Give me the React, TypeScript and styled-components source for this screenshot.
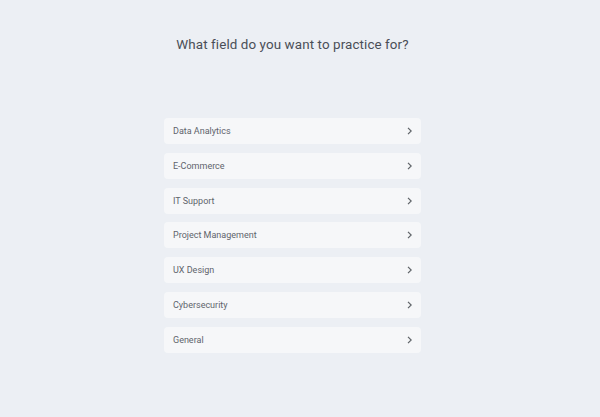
import React from "react";
import styled, { createGlobalStyle } from "styled-components";

const GlobalStyle = createGlobalStyle`
  html, body {
    margin: 0;
    padding: 0;
    background: #eceff4;
  }
  body {
    font-family: Roboto, "Noto Sans", sans-serif;
  }
`

const Page = styled.div`
  display: flex;
  flex-direction: column;
  align-items: center;
  width: 585px;
  height: 417px;
  padding-top: 36px;
  box-sizing: border-box;
`

const Title = styled.h1`
  margin: 0;
  font-size: 13.4px;
  font-weight: 400;
  color: #4a4e57;
  letter-spacing: 0.1px;
  line-height: 18px;
  -webkit-font-smoothing: antialiased;
`

const FieldList = styled.div`
  display: flex;
  flex-direction: column;
  gap: 8.8px;
  width: 257px;
  margin-top: 64px;
`

const FieldRow = styled.button`
  display: flex;
  align-items: center;
  justify-content: space-between;
  height: 26px;
  padding: 0 8px 0 9px;
  border: none;
  border-radius: 4px;
  background: #f6f7f9;
  font-family: Roboto, "Noto Sans", sans-serif;
  font-size: 9px;
  color: #60646c;
  cursor: pointer;
  text-align: left;
`

const Chevron = () => (
    <svg width="5" height="8" viewBox="0 0 5 8" style={{marginRight: "1px"}}>
        <path d="M1 0.8 L4.2 4 L1 7.2" fill="none" stroke="#5f6368" strokeWidth="1.2"/>
    </svg>
)

const fields: string[] = [
    "Data Analytics",
    "E-Commerce",
    "IT Support",
    "Project Management",
    "UX Design",
    "Cybersecurity",
    "General",
]

const App = () => {
    return (
        <>
            <GlobalStyle/>
            <Page>
                <Title>What field do you want to practice for?</Title>
                <FieldList>
                    {fields.map((field) => (
                        <FieldRow key={field}>
                            <span>{field}</span>
                            <Chevron/>
                        </FieldRow>
                    ))}
                </FieldList>
            </Page>
        </>
    )
}
export default App
